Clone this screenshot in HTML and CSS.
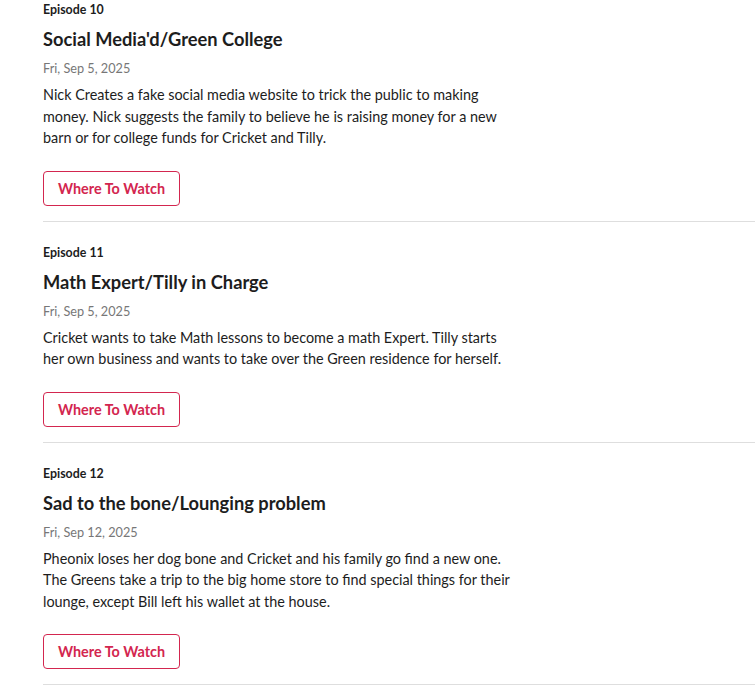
FILE: index.html
```html
<!DOCTYPE html>
<html>
<head>
<meta charset="utf-8">
<link rel="stylesheet" href="styles.css">
</head>
<body>
<div class="list">
  <div class="episode first">
    <div class="ep-label">Episode 10</div>
    <h3 class="ep-title">Social Media'd/Green College</h3>
    <div class="ep-date">Fri, Sep 5, 2025</div>
    <p class="ep-desc">Nick Creates a fake social media website to trick the public to making money. Nick suggests the family to believe he is raising money for a new barn or for college funds for Cricket and Tilly.</p>
    <a class="watch-btn">Where To Watch</a>
  </div>
  <div class="episode">
    <div class="ep-label">Episode 11</div>
    <h3 class="ep-title">Math Expert/Tilly in Charge</h3>
    <div class="ep-date">Fri, Sep 5, 2025</div>
    <p class="ep-desc">Cricket wants to take Math lessons to become a math Expert. Tilly starts her own business and wants to take over the Green residence for herself.</p>
    <a class="watch-btn">Where To Watch</a>
  </div>
  <div class="episode">
    <div class="ep-label">Episode 12</div>
    <h3 class="ep-title">Sad to the bone/Lounging problem</h3>
    <div class="ep-date">Fri, Sep 12, 2025</div>
    <p class="ep-desc">Pheonix loses her dog bone and Cricket and his family go find a new one. The Greens take a trip to the big home store to find special things for their lounge, except Bill left his wallet at the house.</p>
    <a class="watch-btn">Where To Watch</a>
  </div>
</div>
</body>
</html>
```
FILE: styles.css
```css
html, body {
  margin: 0;
  padding: 0;
  background: #fff;
}
body {
  font-family: "Lato", "Liberation Sans", sans-serif;
  color: #1d1d1d;
}
.list {
  padding-left: 43px;
}
.episode {
  display: flex;
  flex-direction: column;
  align-items: flex-start;
  padding-top: 24px;
  padding-bottom: 15px;
  border-bottom: 1px solid #dedede;
}
.episode.first {
  padding-top: 3px;
}
.ep-label {
  font-size: 12.4px;
  line-height: 14px;
  font-weight: 700;
}
.ep-title {
  margin: 10px 0 0;
  font-size: 18.3px;
  line-height: 24px;
  font-weight: 700;
}
.ep-date {
  margin-top: 9px;
  font-size: 12.7px;
  line-height: 16px;
  color: #777;
}
.ep-desc {
  margin: 8px 0 0;
  font-size: 14.4px;
  line-height: 21.5px;
  max-width: 472px;
}
.watch-btn {
  margin-top: 22px;
  box-sizing: border-box;
  width: 137px;
  height: 35px;
  display: flex;
  align-items: center;
  justify-content: center;
  border: 1px solid #d3264f;
  border-radius: 4px;
  color: #d3264f;
  font-size: 14.4px;
  font-weight: 700;
}
```
